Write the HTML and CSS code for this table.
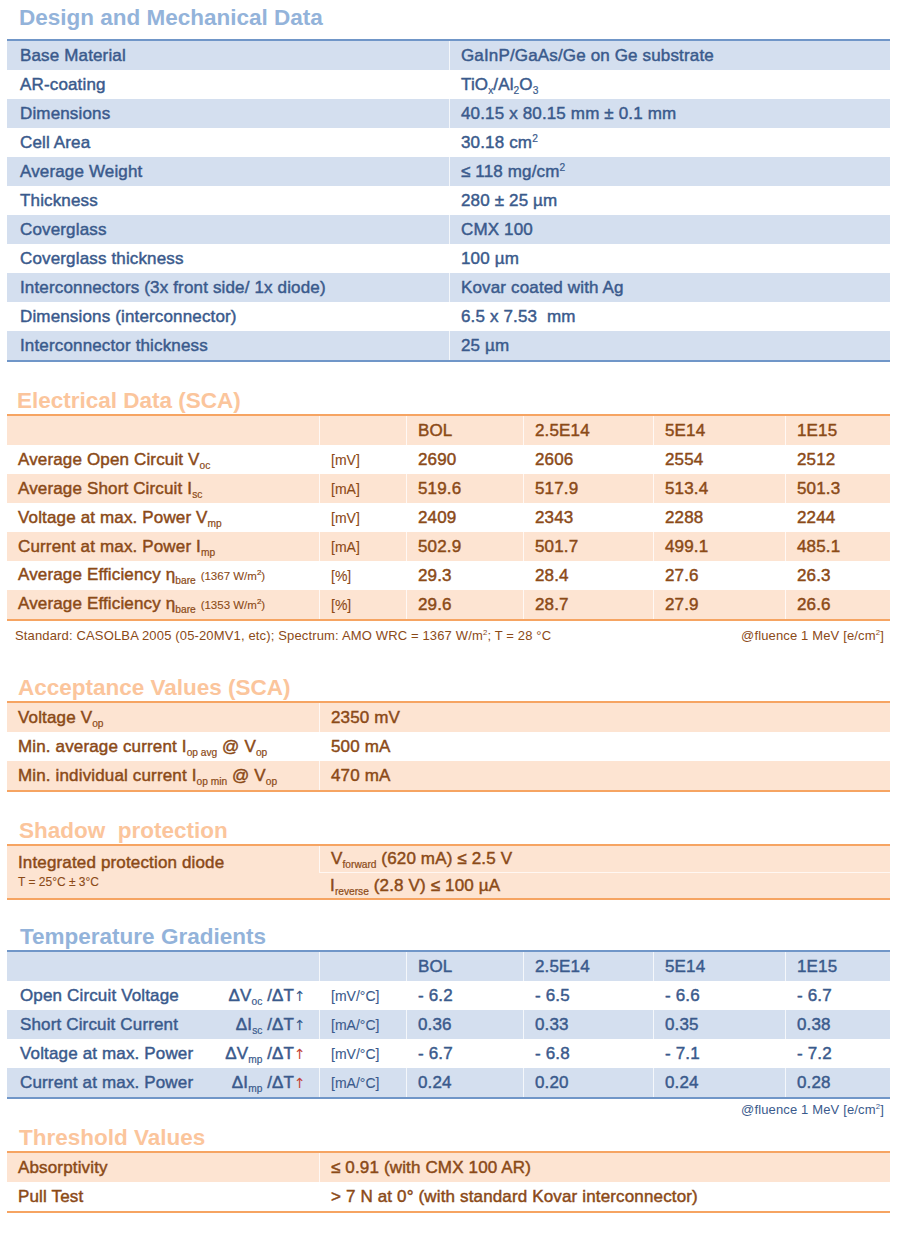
FILE: index.html
```html
<!DOCTYPE html>
<html lang="en">
<head>
    <meta charset="UTF-8">
    <meta name="viewport" content="width=device-width, initial-scale=1.0">
    <title>Solar Cell Datasheet</title>
    <link rel="stylesheet" href="styles.css">
</head>
<body>
<div class="sheet">

    <h2 class="title blue first">Design and Mechanical Data</h2>
    <table class="data blue two">
        <colgroup><col style="width:442px"><col></colgroup>
        <tr class="band"><td>Base Material</td><td>GaInP/GaAs/Ge on Ge substrate</td></tr>
        <tr><td>AR-coating</td><td>TiO<sub>x</sub>/Al<sub>2</sub>O<sub>3</sub></td></tr>
        <tr class="band"><td>Dimensions</td><td>40.15 x 80.15 mm ± 0.1 mm</td></tr>
        <tr><td>Cell Area</td><td>30.18 cm<sup>2</sup></td></tr>
        <tr class="band"><td>Average Weight</td><td>≤ 118 mg/cm<sup>2</sup></td></tr>
        <tr><td>Thickness</td><td>280 ± 25 µm</td></tr>
        <tr class="band"><td>Coverglass</td><td>CMX 100</td></tr>
        <tr><td>Coverglass thickness</td><td>100 µm</td></tr>
        <tr class="band"><td>Interconnectors (3x front side/ 1x diode)</td><td>Kovar coated with Ag</td></tr>
        <tr><td>Dimensions (interconnector)</td><td>6.5 x 7.53&nbsp; mm</td></tr>
        <tr class="band"><td>Interconnector thickness</td><td>25 µm</td></tr>
    </table>

    <h2 class="title orange elec">Electrical Data (SCA)</h2>
    <table class="data orange six">
        <colgroup><col style="width:312px"><col style="width:87px"><col style="width:117px"><col style="width:130px"><col style="width:132px"><col></colgroup>
        <tr class="band"><td></td><td></td><td>BOL</td><td>2.5E14</td><td>5E14</td><td>1E15</td></tr>
        <tr><td>Average Open Circuit V<sub>oc</sub></td><td class="unit">[mV]</td><td>2690</td><td>2606</td><td>2554</td><td>2512</td></tr>
        <tr class="band"><td>Average Short Circuit I<sub>sc</sub></td><td class="unit">[mA]</td><td>519.6</td><td>517.9</td><td>513.4</td><td>501.3</td></tr>
        <tr><td>Voltage at max. Power V<sub>mp</sub></td><td class="unit">[mV]</td><td>2409</td><td>2343</td><td>2288</td><td>2244</td></tr>
        <tr class="band"><td>Current at max. Power I<sub>mp</sub></td><td class="unit">[mA]</td><td>502.9</td><td>501.7</td><td>499.1</td><td>485.1</td></tr>
        <tr><td>Average Efficiency η<sub>bare</sub> <span class="note">(1367 W/m<sup>2</sup>)</span></td><td class="unit">[%]</td><td>29.3</td><td>28.4</td><td>27.6</td><td>26.3</td></tr>
        <tr class="band"><td>Average Efficiency η<sub>bare</sub> <span class="note">(1353 W/m<sup>2</sup>)</span></td><td class="unit">[%]</td><td>29.6</td><td>28.7</td><td>27.9</td><td>26.6</td></tr>
    </table>
    <div class="foot orange-text">
        <span>Standard: CASOLBA 2005 (05-20MV1, etc); Spectrum: AMO WRC = 1367 W/m<sup>2</sup>; T = 28 °C</span>
        <span>@fluence 1 MeV [e/cm<sup>2</sup>]</span>
    </div>

    <h2 class="title orange accept">Acceptance Values (SCA)</h2>
    <table class="data orange two">
        <colgroup><col style="width:312px"><col></colgroup>
        <tr class="band"><td>Voltage V<sub>op</sub></td><td>2350 mV</td></tr>
        <tr><td>Min. average current I<sub>op avg</sub> @ V<sub>op</sub></td><td>500 mA</td></tr>
        <tr class="band"><td>Min. individual current I<sub>op min</sub> @ V<sub>op</sub></td><td>470 mA</td></tr>
    </table>

    <h2 class="title orange shadow">Shadow&nbsp; protection</h2>
    <table class="data orange two shade">
        <colgroup><col style="width:312px"><col></colgroup>
        <tr class="band">
            <td rowspan="2" class="diode">
                <div>Integrated protection diode</div>
                <div class="cond">T = 25°C ± 3°C</div>
            </td>
            <td class="half">V<sub>forward</sub> (620 mA) ≤ 2.5 V</td>
        </tr>
        <tr class="band"><td class="half split-top">I<sub>reverse</sub> (2.8 V) ≤ 100 µA</td></tr>
    </table>

    <h2 class="title blue temp">Temperature Gradients</h2>
    <table class="data blue six">
        <colgroup><col style="width:312px"><col style="width:87px"><col style="width:117px"><col style="width:130px"><col style="width:132px"><col></colgroup>
        <tr class="band"><td></td><td></td><td>BOL</td><td>2.5E14</td><td>5E14</td><td>1E15</td></tr>
        <tr><td><div class="split"><span>Open Circuit Voltage</span><span>ΔV<sub>oc</sub> /ΔT<span class="up">↑</span></span></div></td><td class="unit">[mV/°C]</td><td>- 6.2</td><td>- 6.5</td><td>- 6.6</td><td>- 6.7</td></tr>
        <tr class="band"><td><div class="split"><span>Short Circuit Current</span><span>ΔI<sub>sc</sub> /ΔT<span class="up">↑</span></span></div></td><td class="unit">[mA/°C]</td><td>0.36</td><td>0.33</td><td>0.35</td><td>0.38</td></tr>
        <tr><td><div class="split"><span>Voltage at max. Power</span><span>ΔV<sub>mp</sub> /ΔT<span class="up red">↑</span></span></div></td><td class="unit">[mV/°C]</td><td>- 6.7</td><td>- 6.8</td><td>- 7.1</td><td>- 7.2</td></tr>
        <tr class="band"><td><div class="split"><span>Current at max. Power</span><span>ΔI<sub>mp</sub> /ΔT<span class="up red">↑</span></span></div></td><td class="unit">[mA/°C]</td><td>0.24</td><td>0.20</td><td>0.24</td><td>0.28</td></tr>
    </table>
    <div class="foot blue-text right">
        <span>@fluence 1 MeV [e/cm<sup>2</sup>]</span>
    </div>

    <h2 class="title orange thresh">Threshold Values</h2>
    <table class="data orange two">
        <colgroup><col style="width:312px"><col></colgroup>
        <tr class="band"><td>Absorptivity</td><td>≤ 0.91 (with CMX 100 AR)</td></tr>
        <tr><td>Pull Test</td><td>&gt; 7 N at 0° (with standard Kovar interconnector)</td></tr>
    </table>

</div>
</body>
</html>
```

FILE: styles.css
```css
* {
    padding: 0;
    margin: 0;
    box-sizing: border-box;
}

body {
    background: #fff;
    font-family: "Liberation Sans", Arial, sans-serif;
}

.sheet {
    width: 883px;
    margin-left: 7px;
}

/* section headings */
.title {
    font-size: 22.5px;
    font-weight: bold;
    line-height: 26px;
    padding-left: 12px;
}

.title.blue {
    color: #93b3da;
}

.title.orange {
    color: #fbc59c;
}

.first { padding-top: 5px; padding-bottom: 8px; }
.elec { margin-top: 26px; padding-left: 10px; }
.accept { margin-top: 31px; padding-left: 11px; }
.shadow { margin-top: 26px; }
.temp { margin-top: 24px; padding-left: 13px; }
.thresh { margin-top: 7px; }

/* tables */
.data {
    width: 883px;
    table-layout: fixed;
    border-collapse: separate;
    border-spacing: 0;
    font-size: 17px;
    letter-spacing: 0.15px;
    -webkit-text-stroke: 0.45px currentColor;
}

.data tr {
    height: 29px;
}

.data td {
    padding: 0 0 0 11px;
    line-height: 20px;
    white-space: nowrap;
    vertical-align: middle;
    border-left: 1px solid rgba(255, 255, 255, 0.75);
}

.data td:first-child {
    border-left: none;
}

.data.blue {
    color: #3a5a8c;
    border-top: 2px solid #7096c8;
    border-bottom: 2px solid #7096c8;
}

.data.blue tr.band td {
    background: #d4dfef;
}

.data.blue td:first-child {
    padding-left: 13px;
}

.data.orange {
    color: #8b4a17;
    border-top: 2px solid #f6a462;
    border-bottom: 2px solid #f6a462;
}

.data.orange tr.band td {
    background: #fde4d2;
}

.data sub,
.data sup {
    font-size: 0.6em;
    line-height: 0;
    letter-spacing: 0;
    -webkit-text-stroke: 0.2px currentColor;
}

.data sub {
    vertical-align: -0.35em;
}

.data sup {
    vertical-align: 0.6em;
}

.unit {
    font-size: 14px;
    letter-spacing: 0;
    -webkit-text-stroke: 0.1px currentColor;
}

.note {
    font-size: 11.5px;
    letter-spacing: 0;
    -webkit-text-stroke: 0.1px currentColor;
}

.note sup {
    font-size: 0.7em;
}

/* shadow protection table */
.shade tr {
    height: 26px;
}

.diode {
    line-height: 20px;
}

.diode .cond {
    font-size: 12px;
    line-height: 18px;
    letter-spacing: 0;
    -webkit-text-stroke: 0.1px currentColor;
}

.split-top {
    border-top: 1px solid rgba(255, 255, 255, 0.7);
}

/* temperature table */
.split {
    display: flex;
    justify-content: space-between;
    padding-right: 13px;
}

.up {
    font-family: "DejaVu Sans", sans-serif;
    font-size: 14px;
    -webkit-text-stroke: 0;
}

.up.red {
    color: #c4463a;
}

/* footnotes */
.foot {
    display: flex;
    justify-content: space-between;
    font-size: 13px;
    letter-spacing: 0.15px;
    line-height: 16px;
    padding: 0 6px 0 8px;
}

.foot sup {
    font-size: 0.6em;
    line-height: 0;
}

.foot.orange-text {
    color: #8b4a17;
    margin-top: 7px;
}

.foot.blue-text {
    color: #3a5a8c;
    margin-top: 3px;
}

.foot.right {
    justify-content: flex-end;
}
```
